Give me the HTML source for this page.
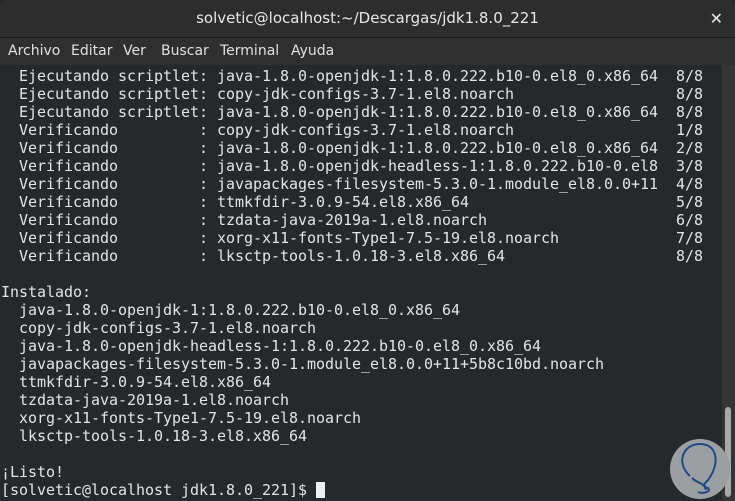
<!DOCTYPE html>
<html><head><style>
html,body{margin:0;padding:0;width:735px;height:501px;overflow:hidden;background:#25292b}
.title{position:absolute;left:0;top:0;width:735px;height:37px;background:#2d2d2d;border-bottom:1px solid #1c1c1c;color:#e8e8e8;font:15px "DejaVu Sans","Liberation Sans",sans-serif;text-align:center;line-height:37px;border-radius:6px 6px 0 0}
.x{position:absolute;right:12px;top:0;font-size:16px;font-weight:bold}
.menu{position:absolute;left:0;top:38px;width:735px;height:27px;background:#2f2f2f;color:#e0e0e0;font:14px "DejaVu Sans","Liberation Sans",sans-serif;line-height:27px}
.menu span{position:absolute}
.term{position:absolute;left:0;top:65px;width:722px;height:436px;background:#25292b}
.sb{position:absolute;left:722px;top:65px;width:13px;height:436px;background:#353535}
.thumb{position:absolute;left:725px;top:407px;width:6px;height:90px;background:#a8a8a8;border-radius:3px}
pre{position:absolute;left:1px;top:67px;margin:0;font:15px/18px "DejaVu Sans Mono","Liberation Mono",monospace;color:#e4e4e4;letter-spacing:-0.03px}
.cur{display:inline-block;width:9px;height:16px;background:#f0f0f0;vertical-align:-3px}
</style></head><body>
<div class="title">solvetic@localhost:~/Descargas/jdk1.8.0_221<span class="x">✕</span></div>
<div class="menu"><span style="left:8px">Archivo</span><span style="left:71px">Editar</span><span style="left:123px">Ver</span><span style="left:161px">Buscar</span><span style="left:220px">Terminal</span><span style="left:291px">Ayuda</span></div>
<div class="term"></div>
<div class="sb"></div><div class="thumb"></div>
<svg style="position:absolute;left:668px;top:436px" width="66" height="65"><circle cx="32" cy="33" r="30" fill="#9b9fa1"/><path d="M22 40 C8 28 14 8 32 8 C50 8 52 28 40 44 C36 48 34 50 40 52 C44 56 34 58 30 56 M24 42 C30 48 36 46 38 54" stroke="#1f4a86" stroke-width="2" fill="none"/></svg>
<pre>  Ejecutando scriptlet: java-1.8.0-openjdk-1:1.8.0.222.b10-0.el8_0.x86_64  8/8
  Ejecutando scriptlet: copy-jdk-configs-3.7-1.el8.noarch                  8/8
  Ejecutando scriptlet: java-1.8.0-openjdk-1:1.8.0.222.b10-0.el8_0.x86_64  8/8
  Verificando         : copy-jdk-configs-3.7-1.el8.noarch                  1/8
  Verificando         : java-1.8.0-openjdk-1:1.8.0.222.b10-0.el8_0.x86_64  2/8
  Verificando         : java-1.8.0-openjdk-headless-1:1.8.0.222.b10-0.el8  3/8
  Verificando         : javapackages-filesystem-5.3.0-1.module_el8.0.0+11  4/8
  Verificando         : ttmkfdir-3.0.9-54.el8.x86_64                       5/8
  Verificando         : tzdata-java-2019a-1.el8.noarch                     6/8
  Verificando         : xorg-x11-fonts-Type1-7.5-19.el8.noarch             7/8
  Verificando         : lksctp-tools-1.0.18-3.el8.x86_64                   8/8

Instalado:
  java-1.8.0-openjdk-1:1.8.0.222.b10-0.el8_0.x86_64
  copy-jdk-configs-3.7-1.el8.noarch
  java-1.8.0-openjdk-headless-1:1.8.0.222.b10-0.el8_0.x86_64
  javapackages-filesystem-5.3.0-1.module_el8.0.0+11+5b8c10bd.noarch
  ttmkfdir-3.0.9-54.el8.x86_64
  tzdata-java-2019a-1.el8.noarch
  xorg-x11-fonts-Type1-7.5-19.el8.noarch
  lksctp-tools-1.0.18-3.el8.x86_64

¡Listo!
[solvetic@localhost jdk1.8.0_221]$ <span class="cur"></span></pre>
</body></html>
